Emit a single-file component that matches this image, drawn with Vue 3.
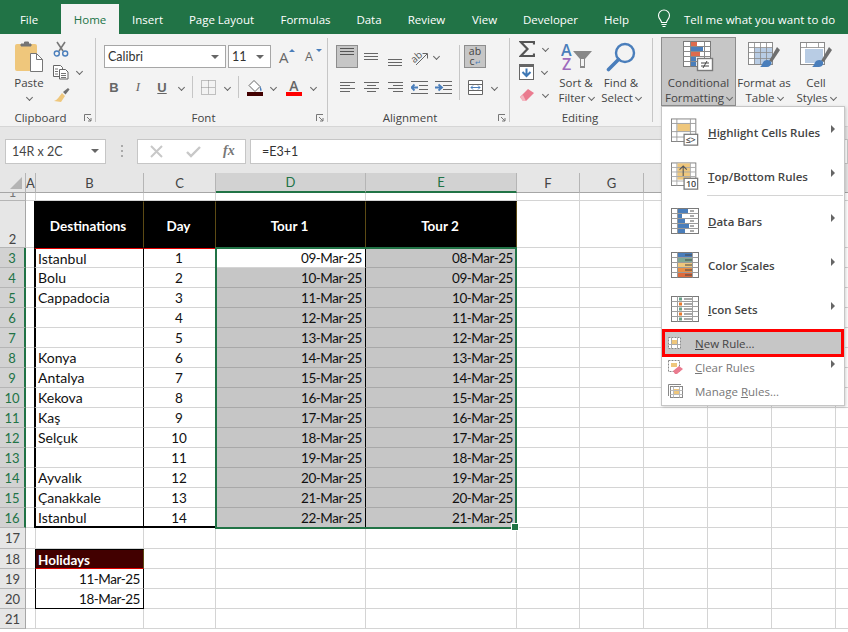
<script setup>
const tabs = ['File', 'Home', 'Insert', 'Page Layout', 'Formulas', 'Data', 'Review', 'View', 'Developer', 'Help']
const colHeads = ['A', 'B', 'C', 'D', 'E', 'F', 'G', 'H', 'I', 'J', 'K']

const names = {
  3: 'Istanbul', 4: 'Bolu', 5: 'Cappadocia', 8: 'Konya', 9: 'Antalya', 10: 'Kekova',
  11: 'Kaş', 12: 'Selçuk', 14: 'Ayvalık', 15: 'Çanakkale', 16: 'Istanbul'
}

const tourRows = []
for (let n = 3; n <= 16; n++) {
  const i = n - 3
  tourRows.push({
    n,
    name: names[n] || '',
    day: i + 1,
    d: `${String(9 + i).padStart(2, '0')}-Mar-25`,
    e: `${String(8 + i).padStart(2, '0')}-Mar-25`
  })
}
const blankCols = 5
</script>

<template>
  <div class="excel">
    <div class="tabs">
      <div v-for="t in tabs" :key="t" class="tab" :class="{ active: t === 'Home' }">{{ t }}</div>
      <div class="tell">
        <svg width="16" height="20" viewBox="0 0 16 20" fill="none" stroke="#fff" stroke-width="1.1">
          <path d="M5.5 13.5c0-2.5-3-3.5-3-7a5.5 5.5 0 0 1 11 0c0 3.500-3 4.500-3 7zM5.500 15.500h5M6.500 17.500h3" />
        </svg>
        <span>Tell me what you want to do</span>
      </div>
    </div>

    <div class="ribbon">
      <!-- clipboard -->
      <section class="group g-clip">
        <div class="body">
          <div class="big paste">
            <div class="big-icon">
              <svg width="29" height="31" viewBox="0 0 29 31">
                <rect x="0" y="3" width="22" height="27" rx="2" fill="#efc77c" />
                <path d="M6 5V3h3.500V1h4v2H16v2z" fill="#757575" stroke="#757575" />
                <path d="M15.500 12.500h6l6 6v12h-12z" fill="#fff" stroke="#767676" />
                <path d="M21.500 12.500v6h6" fill="none" stroke="#767676" />
              </svg>
            </div>
            <div class="line">Paste</div>
            <div class="line"><i class="chev" /></div>
          </div>
          <div class="stack clip-stack">
            <div class="sm">
              <svg width="16" height="16" viewBox="0 0 16 16" fill="none">
                <path d="M4 1l6 9M12 1l-6 9" stroke="#777" stroke-width="1.600" />
                <circle cx="3.800" cy="12.500" r="2.500" stroke="#4a7ebb" stroke-width="1.400" />
                <circle cx="12.200" cy="12.500" r="2.500" stroke="#4a7ebb" stroke-width="1.400" />
              </svg>
            </div>
            <div class="sm">
              <svg width="16" height="16" viewBox="0 0 16 16" fill="#fff" stroke="#666">
                <path d="M.5 1.500h7l2 2v9h-9z" />
                <path d="M6.500 5.500h6l2.500 2.500v7H6.500z" />
                <path d="M2 5h3M2 7.500h3M2 10h3M8 9.500h5M8 11.500h5M8 13.500h5" stroke-width=".9" />
              </svg>
              <i class="chev chev-gap" />
            </div>
            <div class="sm">
              <svg width="17" height="16" viewBox="0 0 17 16">
                <path d="M9 6l3 3-4 6-7-1c3-1 5-4 8-8z" fill="#efc77c" />
                <path d="M10 5l5-4 1.500 1.500-4 5z" fill="#6f6f6f" />
              </svg>
            </div>
          </div>
        </div>
        <div class="glabel">Clipboard
          <svg class="launch" width="8" height="8" viewBox="0 0 8 8" fill="none" stroke="#777"><path d="M.5 7V.5H7M3 3l4 4M7 4v3H4" /></svg>
        </div>
      </section>
      <div class="gsep" />

      <!-- font -->
      <section class="group g-font">
        <div class="body rows">
          <div class="r r-top">
            <div class="combo font-name">Calibri<i class="tri" /></div>
            <div class="combo font-size">11<i class="tri" /></div>
            <div class="grow-a"><span class="a-big">A</span><i class="up" /></div>
            <div class="grow-a shrink"><span class="a-small">A</span><i class="down" /></div>
          </div>
          <div class="r">
            <div class="cell24 fmt bold">B</div>
            <div class="cell24 fmt ital">I</div>
            <div class="cell24 fmt under">U</div>
            <div class="chev-cell"><i class="chev" /></div>
            <div class="rsep" />
            <div class="cell24">
              <svg width="15" height="15" viewBox="0 0 15 15" fill="none" stroke="#8a8a8a" stroke-dasharray="1 1">
                <path d="M.5.500h14v14H.500zM7.500.500v14M.500 7.500h14" />
              </svg>
            </div>
            <div class="chev-cell"><i class="chev" /></div>
            <div class="rsep rsep2" />
            <div class="cell24 colored">
              <svg width="16" height="12" viewBox="0 0 16 12">
                <path d="M7 .5l6 6-5 5-6-6z" fill="#fff" stroke="#666" />
                <path d="M13 6c1 2 2 3 1.500 4.500S12.500 11 13 6z" fill="#4a7ebb" />
              </svg>
              <b class="bar dark" />
            </div>
            <div class="chev-cell small-chev"><i class="chev" /></div>
            <div class="cell24 colored a-color">
              <span>A</span>
              <b class="bar red" />
            </div>
            <div class="chev-cell"><i class="chev" /></div>
          </div>
        </div>
        <div class="glabel">Font
          <svg class="launch" width="8" height="8" viewBox="0 0 8 8" fill="none" stroke="#777"><path d="M.5 7V.5H7M3 3l4 4M7 4v3H4" /></svg>
        </div>
      </section>
      <div class="gsep" />

      <!-- alignment -->
      <section class="group g-align">
        <div class="body">
          <div class="rows align-left">
            <div class="r r-top">
              <div class="cell24 on">
                <svg width="14" height="10" viewBox="0 0 14 10" stroke="#555"><path d="M0 .5h14M0 3.500h14M0 6.500h14" /></svg>
              </div>
              <div class="cell24">
                <svg width="14" height="10" viewBox="0 0 14 10" stroke="#666"><path d="M0 1.500h14M0 4.500h14M0 7.500h14" /></svg>
              </div>
              <div class="cell24 low">
                <svg width="14" height="8" viewBox="0 0 14 8" stroke="#666"><path d="M0 .5h14M0 3.500h14M0 6.500h14" /></svg>
              </div>
              <div class="cell24 orient">
                <svg width="19" height="19" viewBox="0 0 19 19" fill="none">
                  <text x="1" y="14" font-size="10" fill="#555" font-family="Open Sans, sans-serif" transform="rotate(-42 6 11)">ab</text>
                  <path d="M6 18L17 7M12.500 6.500H17.500V11.500" stroke="#666" />
                </svg>
              </div>
              <div class="chev-cell c10"><i class="chev" /></div>
            </div>
            <div class="r">
              <div class="cell24"><svg width="15" height="11" viewBox="0 0 15 11" stroke="#666"><path d="M0 .5h15M0 3.500h10M0 6.500h15M0 9.500h10" /></svg></div>
              <div class="cell24"><svg width="15" height="11" viewBox="0 0 15 11" stroke="#666"><path d="M0 .5h15M3 3.500h9M0 6.500h15M3 9.500h9" /></svg></div>
              <div class="cell24"><svg width="15" height="11" viewBox="0 0 15 11" stroke="#666"><path d="M0 .5h15M5 3.500h10M0 6.500h15M5 9.500h10" /></svg></div>
              <div class="cell24">
                <svg width="17" height="13" viewBox="0 0 17 13" fill="none">
                  <path d="M0 .5h17M8 4.500h9M8 8.500h9M0 12.500h17" stroke="#666" />
                  <path d="M0 6.500h7M3.500 3.500L.5 6.500l3 3" stroke="#4a7ebb" stroke-width="1.800" />
                </svg>
              </div>
              <div class="cell24">
                <svg width="17" height="13" viewBox="0 0 17 13" fill="none">
                  <path d="M0 .5h17M0 4.500h9M0 8.500h9M0 12.500h17" stroke="#666" transform="translate(17 0) scale(-1 1)" />
                  <path d="M0 6.500h7M3.500 3.500l3.500 3-3.500 3" stroke="#4a7ebb" stroke-width="1.800" />
                </svg>
              </div>
            </div>
          </div>
          <div class="rsep tall" />
          <div class="rows">
            <div class="r r-top">
              <div class="wrap-btn"><span>ab</span><span>c<em>↵</em></span></div>
            </div>
            <div class="r">
              <div class="merge">
                <svg width="15" height="15" viewBox="0 0 15 15" fill="#fff" stroke="#666">
                  <path d="M.5.500h14v14H.5zM.5 4.500h14M.5 10.500h14" />
                  <path d="M3 7.500h9M5 5.500l-2 2 2 2M10 5.500l2 2-2 2" fill="none" stroke="#4a7ebb" />
                </svg>
              </div>
              <div class="chev-cell"><i class="chev" /></div>
            </div>
          </div>
        </div>
        <div class="glabel">Alignment
          <svg class="launch" width="8" height="8" viewBox="0 0 8 8" fill="none" stroke="#777"><path d="M.5 7V.5H7M3 3l4 4M7 4v3H4" /></svg>
        </div>
      </section>
      <div class="gsep" />

      <!-- editing -->
      <section class="group g-edit">
        <div class="body">
          <div class="stack edit-stack">
            <div class="sm">
              <svg width="16" height="16" viewBox="0 0 16 16" fill="none" stroke="#555" stroke-width="2.200"><path d="M15 3.500V1H1.800L8.500 8l-6.700 7H15v-2.500" /></svg>
              <i class="chev chev-gap" />
            </div>
            <div class="sm">
              <svg width="15" height="16" viewBox="0 0 15 16">
                <rect x=".5" y=".5" width="14" height="15" fill="#fff" stroke="#666" />
                <rect x="0" y="0" width="15" height="3" fill="#666" />
                <path d="M7.500 4.500v7M3.500 8l4 4 4-4" fill="none" stroke="#3f78b5" stroke-width="2" />
              </svg>
              <i class="chev chev-gap" />
            </div>
            <div class="sm">
              <svg width="16" height="14" viewBox="0 0 16 14"><path d="M1 9l8-8 6 4-8 8H4z" fill="#ea7b8f" /><path d="M1 9l3 4h3L4 7z" fill="#f4b6c0" /></svg>
              <i class="chev chev-gap" />
            </div>
          </div>
          <div class="big sort">
            <div class="big-icon">
              <svg width="31" height="28" viewBox="0 0 31 28">
                <text x="0" y="13" font-size="16" font-weight="600" fill="#4a7ebb" font-family="Open Sans, sans-serif">A</text>
                <text x="1" y="27" font-size="16" font-weight="600" fill="#9e6bbd" font-family="Open Sans, sans-serif">Z</text>
                <path d="M12 8h19l-7 8v9h-5v-9z" fill="#888" />
                <path d="M20 16h3v7h-3z" fill="#f3f3f3" />
              </svg>
            </div>
            <div class="line">Sort &amp;</div>
            <div class="line">Filter <i class="chev" /></div>
          </div>
          <div class="big find">
            <div class="big-icon">
              <svg width="30" height="30" viewBox="0 0 30 30" fill="none" stroke="#4a7ebb">
                <circle cx="19" cy="11" r="9" stroke-width="2.400" />
                <path d="M12.500 17.500L2.500 27.500" stroke-width="3.600" stroke-linecap="round" />
              </svg>
            </div>
            <div class="line">Find &amp;</div>
            <div class="line">Select <i class="chev" /></div>
          </div>
        </div>
        <div class="glabel">Editing</div>
      </section>
      <div class="gsep" />

      <!-- styles -->
      <section class="group g-styles">
        <div class="body">
          <div class="big cf">
            <div class="big-icon">
              <svg width="31" height="31" viewBox="0 0 31 31">
                <rect x=".5" y=".5" width="27" height="25" fill="#fff" stroke="#7a7a7a" />
                <path d="M8 1h6v4H8z" fill="#dd6b4d" />
                <path d="M8 6h12v4H8z" fill="#4a7ebb" />
                <path d="M8 11h9v4H8z" fill="#dd6b4d" />
                <path d="M8 16h5v9H8z" fill="#4a7ebb" />
                <path d="M.5 5.500h27M.5 10.500h27M.5 15.500h27M.5 20.500h27M7.500.5v25M21.500.5v25" fill="none" stroke="#8a8a8a" />
                <rect x="14.500" y="17.500" width="15" height="12" fill="#fff" stroke="#7a7a7a" stroke-width="1.400" />
                <path d="M18 22h8M18 25h8M24 20l-4 7" fill="none" stroke="#444" />
              </svg>
            </div>
            <div class="line">Conditional</div>
            <div class="line">Formatting <i class="chev" /></div>
          </div>
          <div class="big fat">
            <div class="big-icon">
              <svg width="32" height="30" viewBox="0 0 32 30">
                <rect x=".5" y=".5" width="24" height="22" fill="#fff" stroke="#8a8a8a" />
                <rect x="6" y="6" width="18" height="16" fill="#b8cce4" />
                <path d="M.5 5.500h24M.5 10.500h24M.5 16.500h24M6.500.5v22M12.500.5v22M18.500.5v22" fill="none" stroke="#8a8a8a" stroke-width=".8" />
                <path d="M21 19l8-14 3 3-8 12z" fill="#6f6f6f" />
                <path d="M16 19c3-2 6-1 7 1s-1 5-4 5h-7c2-1 2-4 4-6z" fill="#4a7ebb" />
              </svg>
            </div>
            <div class="line">Format as</div>
            <div class="line">Table <i class="chev" /></div>
          </div>
          <div class="big cs">
            <div class="big-icon">
              <svg width="32" height="30" viewBox="0 0 32 30">
                <rect x=".5" y=".5" width="24" height="22" fill="#fff" stroke="#8a8a8a" />
                <path d="M.5 5.500h24M6.500.5v5M18.500.5v5" fill="none" stroke="#8a8a8a" stroke-width=".8" />
                <rect x="5" y="7" width="18" height="14" fill="#b8cce4" />
                <path d="M21 19l8-14 3 3-8 12z" fill="#6f6f6f" />
                <path d="M16 19c3-2 6-1 7 1s-1 5-4 5h-7c2-1 2-4 4-6z" fill="#4a7ebb" />
              </svg>
            </div>
            <div class="line">Cell</div>
            <div class="line">Styles <i class="chev" /></div>
          </div>
        </div>
      </section>
    </div>

    <div class="formula">
      <div class="namebox">14R x 2C<i class="tri" /></div>
      <div class="dots"><i /><i /><i /></div>
      <div class="fbtns">
        <svg width="13" height="13" viewBox="0 0 13 13" stroke="#c8c8c8" stroke-width="2"><path d="M1 1l11 11M12 1L1 12" /></svg>
        <svg width="15" height="13" viewBox="0 0 15 13" fill="none" stroke="#c8c8c8" stroke-width="2.400"><path d="M1 7l4 4 9-9" /></svg>
        <span class="fx">fx</span>
      </div>
      <div class="finput">=E3+1</div>
    </div>

    <div class="sheet">
      <div class="row row-head">
        <div class="corner"><i /></div>
        <div v-for="c in colHeads" :key="c" class="ch" :class="{ sel: c === 'D' || c === 'E' }">{{ c }}</div>
      </div>

      <div class="gridarea">
        <div class="row row-1">
          <div class="rh"><span>1</span></div>
          <div class="c" /><div class="c" /><div class="c" /><div class="c" /><div class="c" />
          <div v-for="k in blankCols" :key="k" class="c" />
          <div class="c" />
        </div>
        <div class="row row-2">
          <div class="rh"><span>2</span></div>
          <div class="c" />
          <div class="c th th-first">Destinations</div>
          <div class="c th">Day</div>
          <div class="c th">Tour 1</div>
          <div class="c th">Tour 2</div>
          <div v-for="k in blankCols" :key="k" class="c" />
          <div class="c" />
        </div>
        <div v-for="r in tourRows" :key="r.n" class="row">
          <div class="rh sel"><span>{{ r.n }}</span></div>
          <div class="c" />
          <div class="c name" :class="{ first: r.n === 3, last: r.n === 16 }">{{ r.name }}</div>
          <div class="c day" :class="{ first: r.n === 3, last: r.n === 16 }">{{ r.day }}</div>
          <div class="c date d-col" :class="{ shade: r.n !== 3 }">{{ r.d }}</div>
          <div class="c date shade">{{ r.e }}</div>
          <div v-for="k in blankCols" :key="k" class="c" />
          <div class="c" />
        </div>
        <div class="row row-17">
          <div class="rh"><span>17</span></div>
          <div class="c" /><div class="c" /><div class="c" /><div class="c" /><div class="c" />
          <div v-for="k in blankCols" :key="k" class="c" />
          <div class="c" />
        </div>
        <div class="row">
          <div class="rh"><span>18</span></div>
          <div class="c" />
          <div class="c hol-h">Holidays</div>
          <div class="c" /><div class="c" /><div class="c" />
          <div v-for="k in blankCols" :key="k" class="c" />
          <div class="c" />
        </div>
        <div class="row">
          <div class="rh"><span>19</span></div>
          <div class="c" />
          <div class="c date hol">11-Mar-25</div>
          <div class="c" /><div class="c" /><div class="c" />
          <div v-for="k in blankCols" :key="k" class="c" />
          <div class="c" />
        </div>
        <div class="row">
          <div class="rh"><span>20</span></div>
          <div class="c" />
          <div class="c date hol hol-last">18-Mar-25</div>
          <div class="c" /><div class="c" /><div class="c" />
          <div v-for="k in blankCols" :key="k" class="c" />
          <div class="c" />
        </div>
        <div class="row">
          <div class="rh"><span>21</span></div>
          <div class="c" /><div class="c" /><div class="c" /><div class="c" /><div class="c" />
          <div v-for="k in blankCols" :key="k" class="c" />
          <div class="c" />
        </div>

        <div class="selection"><i class="handle" /></div>
      </div>
    </div>

    <!-- conditional formatting dropdown -->
    <div class="menu">
      <div class="mi">
        <span class="mi-icon">
          <svg width="31" height="31" viewBox="0 0 31 31">
            <rect x=".5" y=".5" width="27" height="25" fill="#fff" stroke="#7a7a7a" />
            <rect x="7" y="6" width="14" height="8" fill="#efc77c" />
            <path d="M.5 5.500h27M.5 14.500h27M.5 20.500h27M6.500.5v25M21.500.5v25" fill="none" stroke="#9a9a9a" />
            <rect x="14.500" y="17.500" width="15" height="12" fill="#fff" stroke="#7a7a7a" stroke-width="1.400" />
            <text x="16" y="27" font-size="10" fill="#444" font-family="Open Sans, sans-serif">≤&gt;</text>
          </svg>
        </span>
        <span><u>H</u>ighlight Cells Rules</span><i class="arrow" />
      </div>
      <div class="mi">
        <span class="mi-icon">
          <svg width="31" height="31" viewBox="0 0 31 31">
            <rect x=".5" y=".5" width="27" height="25" fill="#fff" stroke="#7a7a7a" />
            <rect x="7" y="1" width="14" height="18" fill="#efc77c" />
            <path d="M.5 5.500h27M.5 10.500h27M.5 15.500h27M.5 20.500h27M6.500.5v25M21.500.5v25" fill="none" stroke="#a8a8a8" />
            <path d="M13.500 15V4M9.500 8l4-4 4 4" fill="none" stroke="#555" stroke-width="1.200" />
            <rect x="14.500" y="17.500" width="15" height="12" fill="#fff" stroke="#7a7a7a" stroke-width="1.400" />
            <text x="16.500" y="27" font-size="10" fill="#444" font-family="Open Sans, sans-serif">10</text>
          </svg>
        </span>
        <span><u>T</u>op/Bottom Rules</span><i class="arrow" />
      </div>
      <div class="msep" />
      <div class="mi">
        <span class="mi-icon">
          <svg width="28" height="26" viewBox="0 0 28 26">
            <rect x=".5" y=".5" width="27" height="25" fill="#fff" stroke="#7a7a7a" />
            <path d="M7 1h10v4H7zM7 6h4v4H7zM7 11h7v4H7zM7 16h11v4H7zM7 21h7v4H7z" fill="#4a7ebb" />
            <path d="M.5 5.500h27M.5 10.500h27M.5 15.500h27M.5 20.500h27M6.500.5v25" fill="none" stroke="#9a9a9a" />
            <path d="M19 3h4M19 8h4M19 13h4M19 18h4M19 23h4" stroke="#555" />
          </svg>
        </span>
        <span><u>D</u>ata Bars</span><i class="arrow" />
      </div>
      <div class="mi">
        <span class="mi-icon">
          <svg width="28" height="26" viewBox="0 0 28 26">
            <rect x=".5" y=".5" width="27" height="25" fill="#fff" stroke="#7a7a7a" />
            <path d="M7 1h15v4H7z" fill="#4a7ebb" /><path d="M7 6h15v4H7z" fill="#7fa994" />
            <path d="M7 11h15v4H7z" fill="#efc77c" /><path d="M7 16h15v4H7z" fill="#e98f45" />
            <path d="M7 21h15v4H7z" fill="#dd6b3d" />
            <path d="M.5 5.500h27M.5 10.500h27M.5 15.500h27M.5 20.500h27M6.500.5v25M21.500.5v25" fill="none" stroke="#9a9a9a" />
            <path d="M14 3h7M14 8h7M14 13h7M14 18h7M14 23h7" stroke="#444" />
          </svg>
        </span>
        <span>Color <u>S</u>cales</span><i class="arrow" />
      </div>
      <div class="mi">
        <span class="mi-icon">
          <svg width="28" height="26" viewBox="0 0 28 26">
            <rect x=".5" y=".5" width="27" height="25" fill="#fff" stroke="#7a7a7a" />
            <path d="M.5 5.500h27M.5 10.500h27M.5 15.500h27M.5 20.500h27M6.500.5v25M21.500.5v25" fill="none" stroke="#a0a0a0" />
            <path d="M8 1.500h3v3H8zM8 11.500h3v3H8zM8 21.500h3v3H8z" fill="#6aa08a" />
            <path d="M8 6.500h3v3H8zM8 16.500h3v3H8z" fill="#e8792f" />
            <path d="M13 3h8M13 8h8M13 13h8M13 18h8M13 23h8" stroke="#555" />
          </svg>
        </span>
        <span><u>I</u>con Sets</span><i class="arrow" />
      </div>
      <div class="mi small hot">
        <span class="ms-icon">
          <svg width="14" height="13" viewBox="0 0 14 13">
            <rect x=".5" y=".5" width="12" height="11" fill="#fff" stroke="#888" stroke-dasharray="2 1" />
            <rect x="4" y="3" width="6" height="4" fill="#efc77c" />
            <path d="M.5 7.500h12M3.500.5v11M9.500.5v11" fill="none" stroke="#aaa" />
          </svg>
        </span>
        <span><u>N</u>ew Rule...</span>
      </div>
      <div class="mi small dim">
        <span class="ms-icon">
          <svg width="16" height="15" viewBox="0 0 16 15">
            <rect x=".5" y=".5" width="11" height="11" fill="#fff" stroke="#888" stroke-dasharray="2 1" />
            <rect x="3" y="3" width="6" height="4" fill="#efc77c" />
            <path d="M5 11l6-5 4 3-6 5H7z" fill="#ea7b8f" />
          </svg>
        </span>
        <span><u>C</u>lear Rules</span><i class="arrow" />
      </div>
      <div class="mi small dim manage">
        <span class="ms-icon">
          <svg width="16" height="15" viewBox="0 0 16 15">
            <path d="M.5 12V.5H13" fill="none" stroke="#888" />
            <rect x="2.500" y="2.500" width="12" height="11" fill="#fff" stroke="#888" />
            <rect x="5" y="5" width="7" height="5" fill="#efc77c" />
            <path d="M2.500 6.500h12M2.500 10.500h12M5.500 2.500v11M11.500 2.500v11" fill="none" stroke="#bbb" />
          </svg>
        </span>
        <span>Manage <u>R</u>ules...</span>
      </div>
    </div>
  </div>
</template>

<style>
html, body { margin: 0; background: #fff; overflow: hidden; }
</style>

<style scoped>
.excel {
  position: relative;
  width: 848px;
  height: 632px;
  overflow: hidden;
  background: #fff;
  font-family: "Open Sans", "Noto Sans", sans-serif;
  font-size: 11.5px;
  color: #444;
}

/* title tabs */
.tabs {
  display: grid;
  grid-template-columns: 61px 58px 57px 91px 77px 50px 65px 51px 81px 51px 1fr;
  height: 34px;
  background: #217346;
  color: #fff;
  font-size: 11.5px;
}
.tab { display: flex; align-items: center; justify-content: center; padding-top: 4px; box-sizing: border-box; }
.tab:first-child { padding-right: 3px; }
.tab.active { margin-top: 4px; padding-top: 0; background: #f3f3f3; color: #217346; }
.tell { display: flex; align-items: center; padding: 4px 0 0 14px; gap: 12px; box-sizing: border-box; white-space: nowrap; }

/* ribbon */
.ribbon {
  display: flex;
  height: 92px;
  background: #f3f3f3;
  border-bottom: 1px solid #d6d6d6;
  box-sizing: content-box;
}
.group { display: flex; flex-direction: column; flex: none; box-sizing: border-box; padding-top: 11px; position: relative; }
.gsep { width: 1px; flex: none; margin: 4px 0 4px; background: #c6c6c6; }
.g-clip { width: 95px; }
.g-font { width: 231px; padding-left: 6px; }
.g-align { width: 181px; padding-left: 7px; }
.g-edit { width: 142px; padding-left: 7px; }
.g-styles { flex: 1; padding-left: 8px; }

.body { display: flex; height: 65px; flex: none; }
.rows { display: flex; flex-direction: column; gap: 7px; }
.r { display: flex; align-items: center; height: 24px; }
.r-top { height: 23px; }

.glabel { position: relative; height: 16px; line-height: 15px; text-align: center; color: #444; }
.g-clip .glabel { padding-right: 14px; }
.g-font .glabel { padding-right: 22px; }
.g-align .glabel { padding-right: 24px; }
.g-edit .glabel { padding-right: 9px; }
.launch { position: absolute; right: 3px; top: 4px; }

.big {
  display: flex; flex-direction: column; align-items: center; flex: none;
  margin-top: -8px; height: 69px; box-sizing: border-box;
  border: 1px solid transparent; color: #444;
}
.big-icon { height: 37px; display: flex; align-items: center; justify-content: center; }
.line { height: 15px; line-height: 15px; white-space: nowrap; }

.paste { width: 42px; margin-left: 8px; }
.clip-stack { margin-left: 0; width: 38px; padding-left: 3px; }
.stack { margin-top: -8px; display: flex; flex-direction: column; }
.sm { height: 23px; display: flex; align-items: center; }
.chev-gap { margin-left: 8px; }

.edit-stack { width: 39px; padding-left: 2px; box-sizing: border-box; }
.sort { width: 40px; }
.find { width: 46px; margin-left: 2px; }
.cf {
  width: 75px; background: #c6c6c6; border-color: #8d8d8d;
}
.fat { width: 56px; }
.cs { width: 48px; }

.chev {
  display: inline-block;
  width: 4px; height: 4px;
  border-right: 1px solid #666; border-bottom: 1px solid #666;
  transform: rotate(45deg);
  vertical-align: 2px;
}
.tri { width: 0; height: 0; border-left: 4px solid transparent; border-right: 4px solid transparent; border-top: 4px solid #666; }

/* font group */
.combo {
  display: flex; align-items: center; justify-content: space-between;
  height: 23px; box-sizing: border-box;
  background: #fff; border: 1px solid #a6a6a6;
  padding: 0 6px 0 3px;
  font-family: Lato, sans-serif; font-size: 12.5px; color: #333;
}
.font-name { width: 122px; margin-left: 2px; }
.font-size { width: 43px; margin-left: 2px; }
.grow-a { position: relative; width: 24px; height: 23px; display: flex; align-items: center; color: #666; }
.grow-a { margin-left: 2px; padding-left: 6px; box-sizing: border-box; }
.shrink { margin-left: 0; padding-left: 8px; }
.a-big { font-size: 15px; }
.a-small { font-size: 12.5px; }
.up, .down { position: absolute; top: 4px; left: 16px; width: 0; height: 0; border-left: 3px solid transparent; border-right: 3px solid transparent; }
.up { border-bottom: 3px solid #4a7ebb; }
.down { border-top: 3px solid #4a7ebb; left: 19px; }

.cell24 { width: 24px; height: 23px; flex: none; display: flex; align-items: center; justify-content: center; box-sizing: border-box; }
.chev-cell { width: 14px; flex: none; display: flex; justify-content: center; }
.c10 { width: 10px; }
.fmt { font-size: 13px; color: #666; font-family: "Liberation Sans", sans-serif; }
.bold { font-weight: 700; }
.ital { font-style: italic; font-family: "Liberation Serif", serif; }
.under { text-decoration: underline; font-weight: 700; }
.rsep { width: 1px; height: 22px; flex: none; background: #c6c6c6; margin: 0 3px 0 4px; }
.rsep2 { margin: 0 4px; }
.colored { flex-direction: column; justify-content: flex-start; padding-top: 4px; }
.bar { display: block; width: 16px; height: 4px; margin-top: 0; }
.bar.dark { background: #420000; }
.bar.red { background: #f00; }
.small-chev { width: 12px; margin-right: 3px; }
.a-color { color: #666; font-size: 14px; font-weight: 600; line-height: 12px; }

/* alignment */
.align-left { width: 120px; }
.on { background: #c6c6c6; border: 1px solid #8d8d8d; align-items: flex-start; padding-top: 2px; margin: 0 1px; width: 22px; }
.low { align-items: flex-end; padding-bottom: 1px; }
.rsep.tall { height: 55px; margin: 0 4px 0 4px; }
.wrap-btn {
  width: 22px; height: 23px; box-sizing: border-box;
  background: #c6c6c6; border: 1px solid #8d8d8d;
  display: flex; flex-direction: column; align-items: center;
  font-size: 10.5px; line-height: 10px; color: #444;
}
.wrap-btn em { font-style: normal; color: #4a7ebb; font-size: 7px; }
.merge { width: 22px; display: flex; justify-content: center; }
.merge + .chev-cell { margin-left: 1px; }

/* formula bar */
.formula {
  display: flex; align-items: center;
  height: 46px; box-sizing: border-box;
  padding: 2px 0 0 5px;
  background: #e6e6e6;
  color: #444;
}
.namebox {
  display: flex; align-items: center; justify-content: space-between;
  width: 101px; height: 25px; box-sizing: border-box;
  background: #fff; border: 1px solid #c6c6c6;
  padding: 0 6px;
  font-family: Lato, sans-serif; font-size: 12.5px; color: #444;
}
.dots { width: 31px; display: flex; flex-direction: column; align-items: center; gap: 3px; }
.dots i { width: 2px; height: 2px; background: #aaa; }
.fbtns {
  display: flex; align-items: center;
  width: 109px; height: 25px; box-sizing: border-box;
  background: #fff; border: 1px solid #c6c6c6;
  padding-left: 12px;
}
.fbtns svg:nth-child(2) { margin-left: 23px; }
.fx { margin-left: 22px; font-family: "Liberation Serif", serif; font-style: italic; font-weight: 700; font-size: 14px; color: #777; }
.finput {
  flex: 1; height: 25px; margin-left: 4px; box-sizing: border-box;
  background: #fff; border: 1px solid #c6c6c6;
  padding-left: 11px; line-height: 23px;
  font-family: Lato, sans-serif; font-size: 12.5px; color: #333;
}

/* sheet */
.sheet { height: 459px; overflow: hidden; font-family: Lato, sans-serif; }
.row {
  display: grid;
  grid-template-columns: 26px 10px 108px 72px 150px 151px 63px 64px 64px 64px 64px 64px;
  height: 20px;
}
.row-head { height: 20px; background: #e6e6e6; }
.row-1 { height: 8px; }
.row-2 { height: 47px; }
.row-17 { height: 21px; }
.corner { position: relative; border-right: 1px solid #b5b5b5; border-bottom: 1px solid #a6a6a6; box-sizing: border-box; }
.corner i {
  position: absolute; right: 3px; bottom: 3px; width: 0; height: 0;
  border-left: 12px solid transparent; border-bottom: 12px solid #b4b4b4;
}
.ch {
  display: flex; align-items: center; justify-content: center;
  box-sizing: border-box;
  border-right: 1px solid #b5b5b5; border-bottom: 1px solid #a6a6a6;
  font-size: 13px; color: #444;
}
.ch.sel { background: #d2d2d2; color: #217346; border-bottom: 2px solid #217346; }

.gridarea { position: relative; }
.rh {
  display: flex; align-items: center; justify-content: center;
  background: #e6e6e6; box-sizing: border-box;
  border-right: 1px solid #a6a6a6; border-bottom: 1px solid #b5b5b5;
  font-size: 13px; color: #444; overflow: hidden;
}
.rh.sel { background: #d2d2d2; color: #217346; border-right: 2px solid #217346; }
.row-1 .rh span { margin-bottom: 10px; color: #777; }
.row-2 .rh { align-items: flex-end; }
.c {
  box-sizing: border-box;
  border-right: 1px solid #d4d4d4; border-bottom: 1px solid #d4d4d4;
  font-size: 14px; color: #111; line-height: 20px;
  padding: 0 2px 0 3px; white-space: nowrap; overflow: hidden;
}
.th {
  display: flex; align-items: center; justify-content: center;
  background: #000; color: #fff; font-weight: 700; font-size: 13.5px;
  border-right-color: #5c4a14; border-bottom-color: #000;
  border-top: 1px solid #000; padding: 2px 4px 0 2px;
}
.th-first { margin-left: -2px; padding-right: 3px; }
.name { border-left: 2px solid #000; border-right: 1px solid #000; margin-left: -2px; padding-left: 2px; }
.day { text-align: center; border-right: 1px solid #000; font-size: 13.5px; padding-right: 4px; }
.name.first, .day.first { border-top: 1px solid #e00000; line-height: 19px; }
.name.last, .day.last { border-bottom: 2px solid #000; }
.date { text-align: right; font-size: 13.5px; letter-spacing: -0.45px; padding-right: 3px; }
.d-col { border-right-color: #000; }
.shade { background: #c6c6c6; border-bottom-color: #a8a8a8; }
.hol-h {
  margin-left: -1px; padding-left: 2px;
  background: #420000; color: #fff; font-weight: 700; font-size: 13.5px;
  border-left: 1px solid #000; border-right: 1px solid #5c4a14;
  border-top: 1px solid #000; border-bottom: 1px solid #e00000;
}
.hol { margin-left: -1px; border-left: 1px solid #000; border-right: 1px solid #000; line-height: 21px; }
.hol-last { border-bottom: 1px solid #000; }

.selection {
  position: absolute;
  left: 215px; top: 54px;
  width: 302px; height: 282px;
  box-sizing: border-box;
  border: 2px solid #217346;
  pointer-events: none;
}
.handle {
  position: absolute; right: -4px; bottom: -4px;
  width: 6px; height: 6px;
  background: #217346; border: 1px solid #fff;
}

/* dropdown */
.menu {
  position: absolute;
  left: 661px; top: 106px;
  width: 184px; height: 300px;
  box-sizing: border-box;
  padding-top: 3px;
  background: #fff;
  border: 1px solid #c6c6c6;
  box-shadow: 1px 1px 3px rgba(0, 0, 0, 0.18);
  font-size: 11.5px; color: #444;
}
.mi { display: flex; align-items: center; height: 44px; box-sizing: border-box; font-weight: 600; }
.mi-icon { width: 37px; padding-left: 9px; flex: none; display: flex; box-sizing: border-box; margin-right: 9px; }
.arrow {
  margin-left: auto; margin-right: 9px; transform: translateY(-3px);
  width: 0; height: 0;
  border-top: 4px solid transparent; border-bottom: 4px solid transparent;
  border-left: 4px solid #666;
}
.msep { height: 1px; margin: -3px 1px 3px 45px; background: #d4d4d4; }
.mi.small { height: 20px; font-weight: 400; }
.ms-icon { width: 33px; padding-left: 6px; flex: none; box-sizing: border-box; display: flex; }
.hot {
  margin-top: -2px;
  height: 28px !important;
  background: #c6c6c6;
  border: 3px solid #f00;
  color: #444;
}
.hot .ms-icon { margin-left: -3px; }
.dim { color: #777; }
.manage { margin-top: 2px; height: 24px !important; }
</style>
